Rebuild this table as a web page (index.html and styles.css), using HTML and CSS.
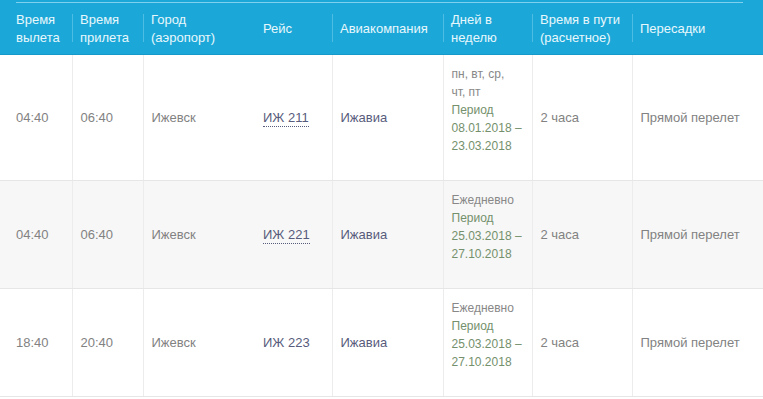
FILE: index.html
```html
<!DOCTYPE html>
<html lang="ru">
<head>
<meta charset="utf-8">
<title>Расписание</title>
<link rel="stylesheet" href="styles.css">
</head>
<body>
<div class="schedule">
  <table class="grid">
    <colgroup>
      <col class="c-dep"><col class="c-arr"><col class="c-city"><col class="c-flight">
      <col class="c-air"><col class="c-days"><col class="c-dur"><col class="c-tr">
    </colgroup>
    <thead>
      <tr>
        <th class="first">Время<br>вылета</th>
        <th class="div">Время<br>прилета</th>
        <th class="div">Город<br>(аэропорт)</th>
        <th>Рейс</th>
        <th class="div">Авиакомпания</th>
        <th class="div">Дней в<br>неделю</th>
        <th class="div">Время в пути<br>(расчетное)</th>
        <th class="div">Пересадки</th>
      </tr>
    </thead>
    <tbody>
      <tr>
        <td class="first time">04:40</td>
        <td class="time">06:40</td>
        <td class="city">Ижевск</td>
        <td class="noline flight"><span class="code dotted">ИЖ 211</span></td>
        <td class="air">Ижавиа</td>
        <td class="days"><div class="days-box"><span class="d-gray">пн, вт, ср,<br>чт, пт</span><br><span class="d-green">Период<br>08.01.2018 –<br>23.03.2018</span></div></td>
        <td class="dur">2 часа</td>
        <td class="tr">Прямой перелет</td>
      </tr>
      <tr class="alt">
        <td class="first time">04:40</td>
        <td class="time">06:40</td>
        <td class="city">Ижевск</td>
        <td class="noline flight"><span class="code dotted">ИЖ 221</span></td>
        <td class="air">Ижавиа</td>
        <td class="days"><div class="days-box"><span class="d-gray">Ежедневно</span><br><span class="d-green">Период<br>25.03.2018 –<br>27.10.2018</span></div></td>
        <td class="dur">2 часа</td>
        <td class="tr">Прямой перелет</td>
      </tr>
      <tr>
        <td class="first time">18:40</td>
        <td class="time">20:40</td>
        <td class="city">Ижевск</td>
        <td class="noline flight"><span class="code">ИЖ 223</span></td>
        <td class="air">Ижавиа</td>
        <td class="days"><div class="days-box"><span class="d-gray">Ежедневно</span><br><span class="d-green">Период<br>25.03.2018 –<br>27.10.2018</span></div></td>
        <td class="dur">2 часа</td>
        <td class="tr">Прямой перелет</td>
      </tr>
    </tbody>
  </table>
</div>
</body>
</html>
```
FILE: styles.css
```css
html, body {
  margin: 0;
  padding: 0;
  background: #ffffff;
}

body {
  font-family: "Liberation Sans", Arial, sans-serif;
  font-size: 13px;
  line-height: 18px;
  color: #808080;
}

.schedule {
  width: 763px;
  background:
    linear-gradient(#7fd0ee, #7fd0ee) 16px 2px / 727px 1px no-repeat,
    linear-gradient(#1ba8d8, #1ba8d8) 0 0 / 100% 55px no-repeat;
}

.grid {
  width: 763px;
  border-collapse: collapse;
  table-layout: fixed;
}

.c-dep { width: 72px; }
.c-arr { width: 71px; }
.c-city { width: 112px; }
.c-flight { width: 77px; }
.c-air { width: 111px; }
.c-days { width: 89px; }
.c-dur { width: 100px; }
.c-tr { width: 131px; }

th {
  text-align: left;
  font-weight: normal;
  color: #e8f7fc;
  padding: 11px 8px 7px;
  vertical-align: middle;
  border-bottom: 1px solid #1699c8;
  white-space: nowrap;
}

th.first {
  padding-left: 16px;
}

th.div {
  background: linear-gradient(#4dbde4, #4dbde4) left 14px / 1px 28px no-repeat;
}

td {
  padding: 10px 8px;
  vertical-align: middle;
  border-left: 1px solid #ececec;
  border-bottom: 1px solid #e6e6e6;
  white-space: nowrap;
}

td.first {
  padding-left: 16px;
  border-left: none;
}

td.noline {
  border-left: none;
}

tr.alt td {
  background: #f7f7f7;
}

.time, .city, .dur, .tr {
  color: #828282;
}

.flight, .air {
  color: #585c7c;
}

.code.dotted {
  border-bottom: 1px dotted #585c7c;
  padding-bottom: 1px;
}

.days {
  font-size: 12px;
}

.days-box {
  margin-bottom: 15px;
}

.d-gray {
  color: #888888;
}

.d-green {
  color: #74906c;
}
```
